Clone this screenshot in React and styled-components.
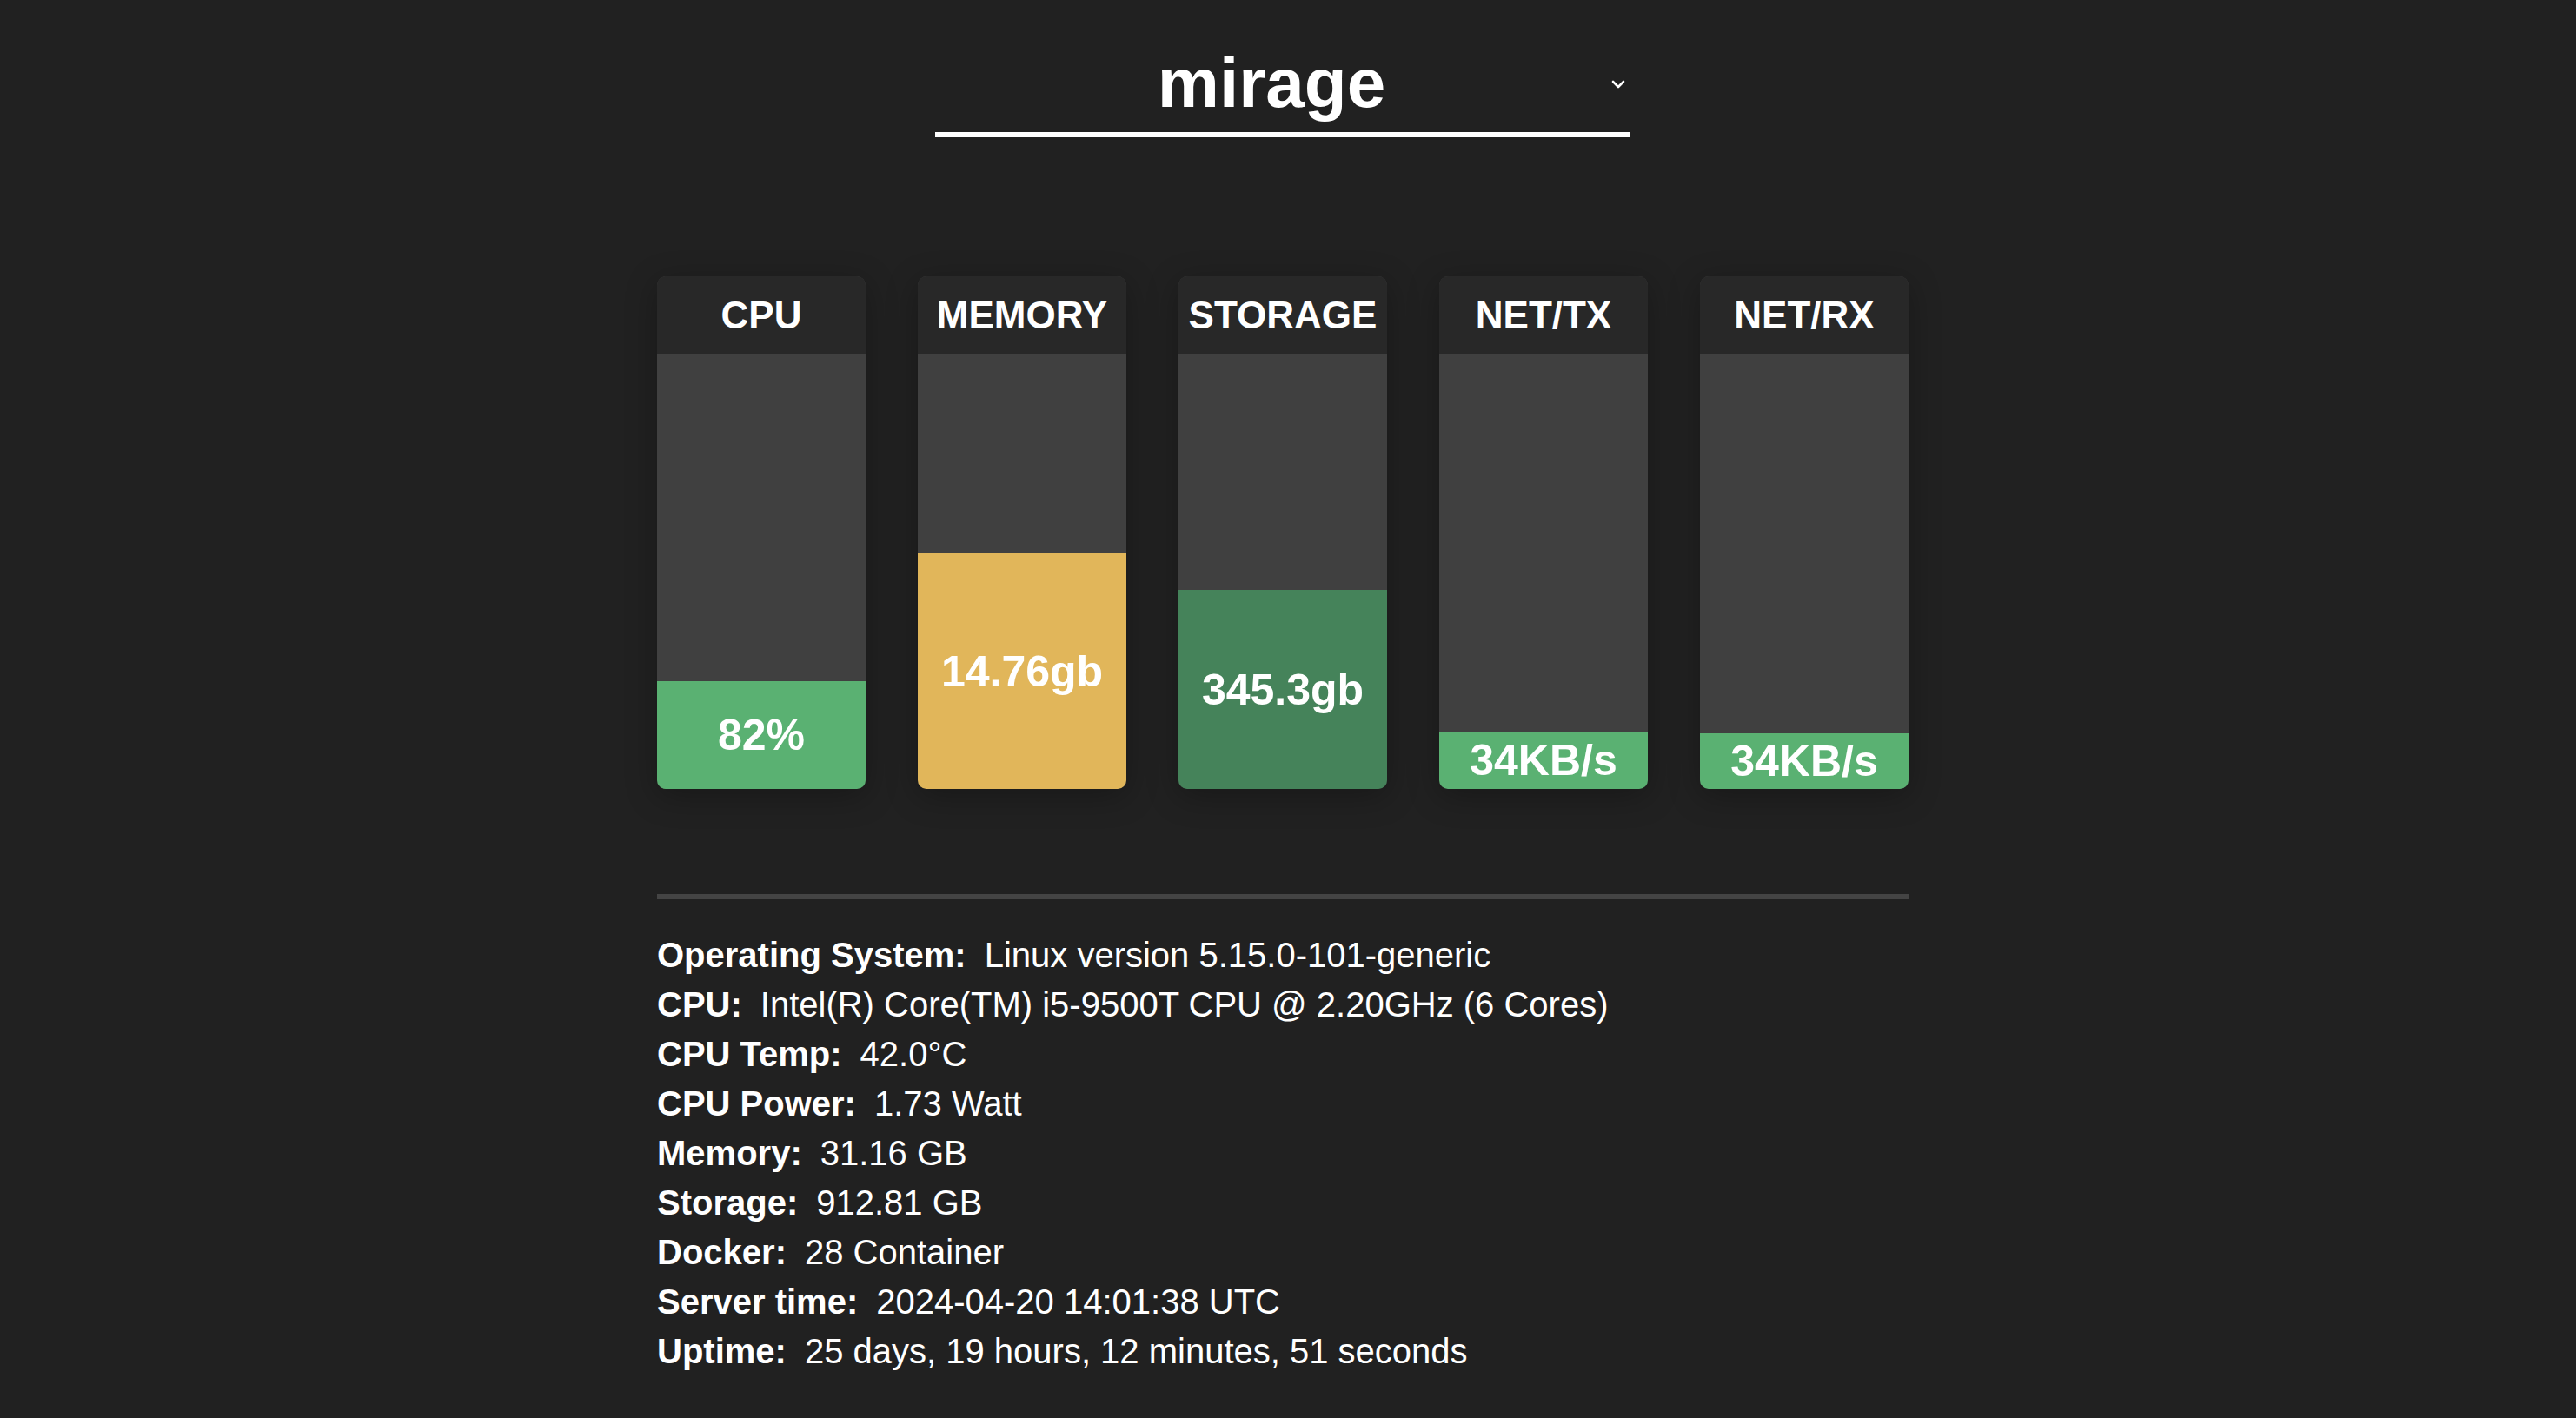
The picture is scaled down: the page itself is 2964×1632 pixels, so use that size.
import React from "react";
import styled, { createGlobalStyle } from "styled-components";

const Global = createGlobalStyle`
  html, body {
    margin: 0;
    padding: 0;
    background: #212121;
    color: #ffffff;
    font-family: "Liberation Sans", Arial, Helvetica, sans-serif;
  }
  * { box-sizing: border-box; }
`;

const Page = styled.div`
  min-height: 1632px;
  padding: 50px 12px 0 0;
  display: flex;
  flex-direction: column;
  align-items: center;
`;

const Select = styled.div`
  width: 800px;
  display: flex;
  align-items: center;
  padding-bottom: 10px;
  border-bottom: 6px solid #ffffff;
`;

const SelectText = styled.div`
  flex: 1;
  text-align: center;
  font-size: 80px;
  line-height: 92px;
  font-weight: 700;
  color: #ffffff;
`;

const Chevron = styled.svg`
  width: 16px;
  height: 10px;
  margin: 2px 6px 0 4px;
  flex: none;
`;

const Cards = styled.div`
  margin-top: 160px;
  width: 1440px;
  display: flex;
  justify-content: space-between;
`;

const Card = styled.div`
  width: 240px;
  height: 590px;
  display: flex;
  flex-direction: column;
  border-radius: 10px;
  overflow: hidden;
  background: #404040;
  box-shadow: 0 8px 36px rgba(0, 0, 0, 0.28);
`;

const CardHeader = styled.div`
  height: 90px;
  flex: none;
  background: #282828;
  display: flex;
  align-items: center;
  justify-content: center;
  font-size: 44px;
  font-weight: 700;
  color: #ffffff;
`;

const Track = styled.div`
  flex: 1;
  display: flex;
  flex-direction: column;
  justify-content: flex-end;
`;

const Fill = styled.div`
  background: ${(p) => p.$color};
  display: flex;
  align-items: center;
  justify-content: center;
  font-size: 50px;
  font-weight: 700;
  color: #ffffff;
  white-space: nowrap;
`;

const Divider = styled.div`
  margin-top: 121px;
  width: 1440px;
  height: 6px;
  background: #444444;
`;

const Info = styled.div`
  margin-top: 36px;
  width: 1440px;
  display: flex;
  flex-direction: column;
`;

const Row = styled.div`
  font-size: 40px;
  line-height: 57px;
  color: #ffffff;
  white-space: nowrap;
`;

const Label = styled.span`
  font-weight: 700;
  margin-right: 21px;
`;

const GREEN = "#5ab172";
const YELLOW = "#e1b65a";
const DARKGREEN = "#45835a";

const stats = [
  { name: "CPU", value: "82%", height: 124, color: GREEN },
  { name: "MEMORY", value: "14.76gb", height: 271, color: YELLOW },
  { name: "STORAGE", value: "345.3gb", height: 229, color: DARKGREEN },
  { name: "NET/TX", value: "34KB/s", height: 66, color: GREEN },
  { name: "NET/RX", value: "34KB/s", height: 64, color: GREEN },
];

const info = [
  ["Operating System:", "Linux version 5.15.0-101-generic"],
  ["CPU:", "Intel(R) Core(TM) i5-9500T CPU @ 2.20GHz (6 Cores)"],
  ["CPU Temp:", "42.0°C"],
  ["CPU Power:", "1.73 Watt"],
  ["Memory:", "31.16 GB"],
  ["Storage:", "912.81 GB"],
  ["Docker:", "28 Container"],
  ["Server time:", "2024-04-20 14:01:38 UTC"],
  ["Uptime:", "25 days, 19 hours, 12 minutes, 51 seconds"],
];

export default function App() {
  return (
    <>
      <Global />
      <Page>
        <Select>
          <SelectText>mirage</SelectText>
          <Chevron viewBox="0 0 16 10">
            <path
              d="M2 2 L8 8 L14 2"
              fill="none"
              stroke="#ffffff"
              strokeWidth="2.6"
              strokeLinecap="round"
              strokeLinejoin="round"
            />
          </Chevron>
        </Select>
        <Cards>
          {stats.map((s) => (
            <Card key={s.name}>
              <CardHeader>{s.name}</CardHeader>
              <Track>
                <Fill $color={s.color} style={{ height: `${s.height}px` }}>
                  {s.value}
                </Fill>
              </Track>
            </Card>
          ))}
        </Cards>
        <Divider />
        <Info>
          {info.map(([k, v]) => (
            <Row key={k}>
              <Label>{k}</Label>
              {v}
            </Row>
          ))}
        </Info>
      </Page>
    </>
  );
}
